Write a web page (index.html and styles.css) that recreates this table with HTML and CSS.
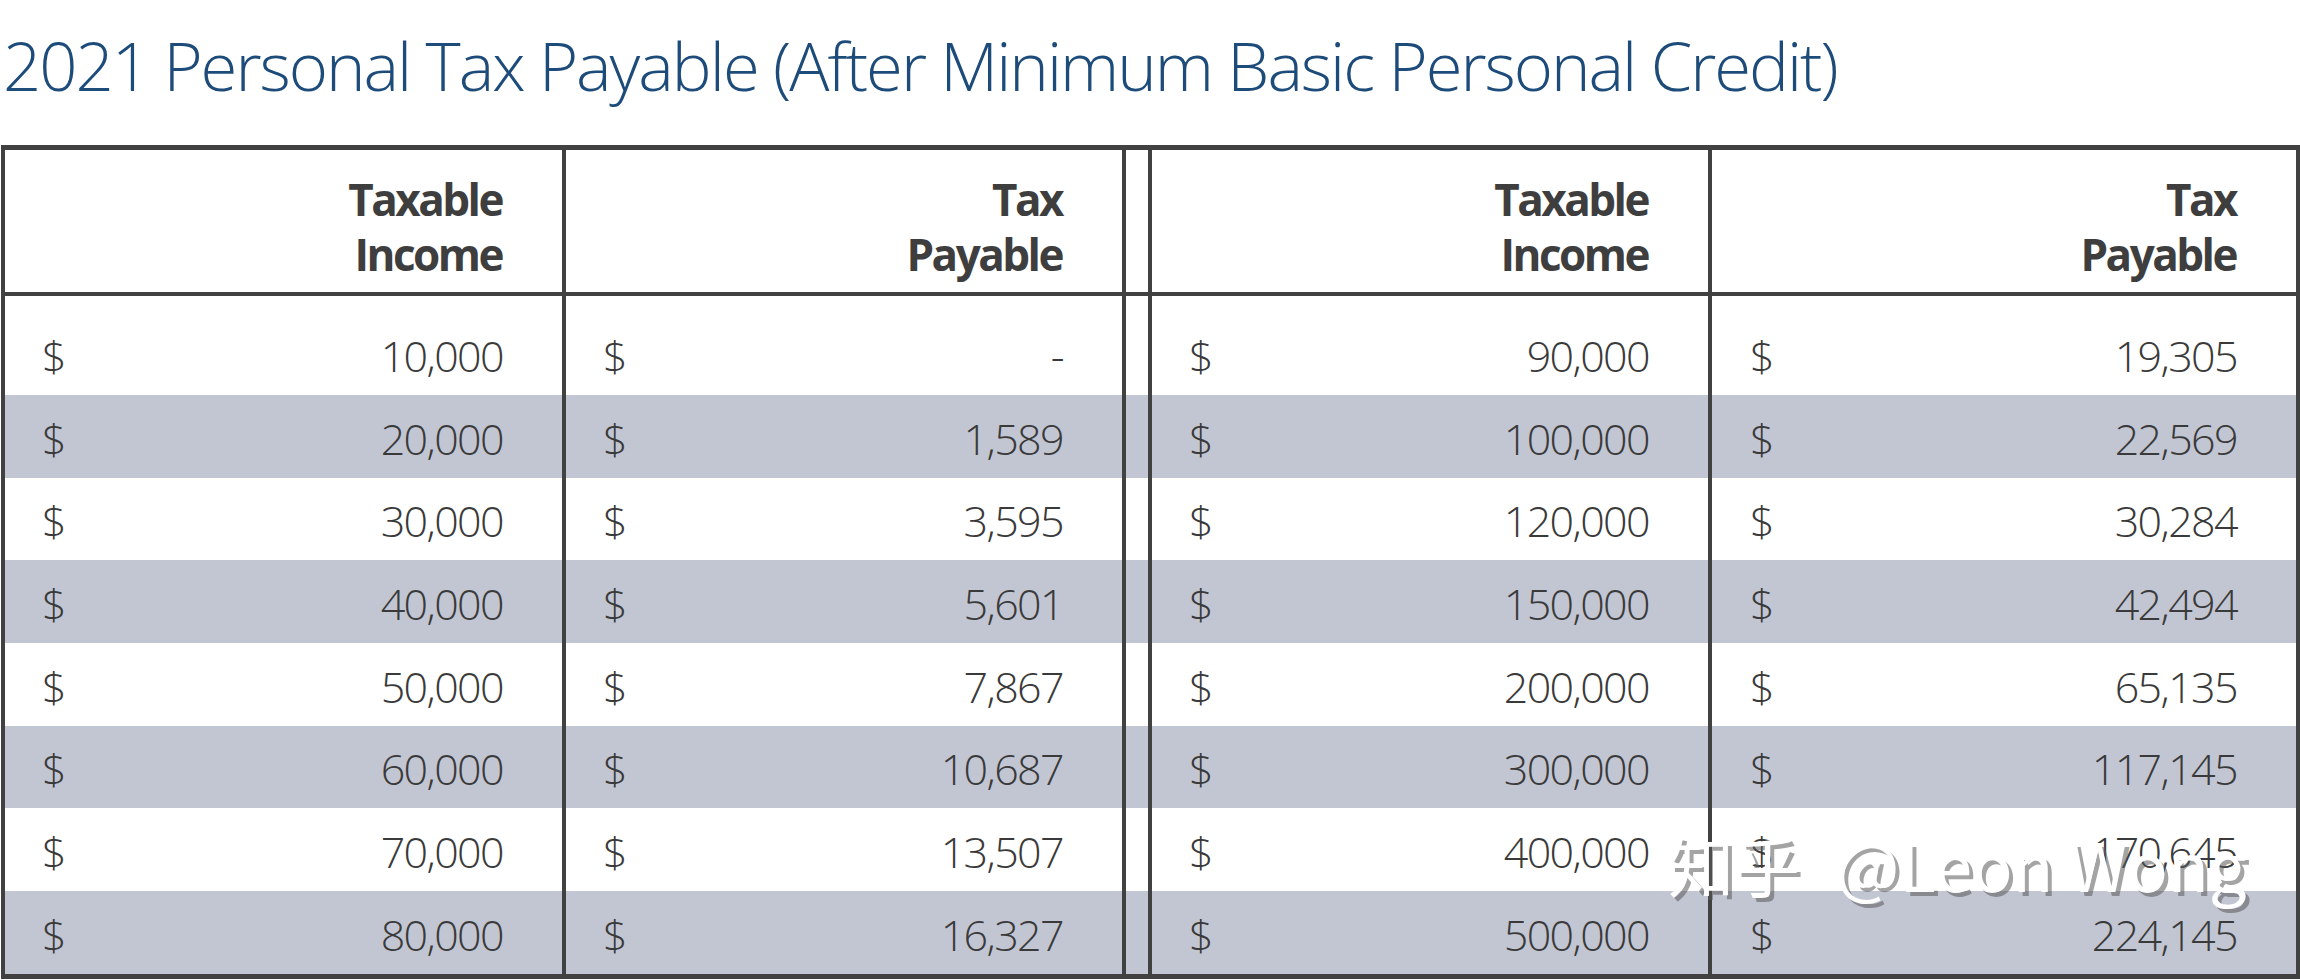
FILE: index.html
```html
<!DOCTYPE html>
<html lang="en">
<head>
<meta charset="utf-8">
<title>2021 Personal Tax Payable</title>
<link rel="stylesheet" href="styles.css">
</head>
<body>
<div class="page">
  <h1 class="title">2021 Personal Tax Payable (After Minimum Basic Personal Credit)</h1>
  <div class="sheet">
    <div class="row head">
      <div class="cell"><span class="hd">Taxable<br>Income</span></div>
      <div class="cell"><span class="hd">Tax<br>Payable</span></div>
      <div class="cell gap"></div>
      <div class="cell"><span class="hd">Taxable<br>Income</span></div>
      <div class="cell last"><span class="hd">Tax<br>Payable</span></div>
    </div>
    <div class="row first">
      <div class="cell"><span>$</span><span>10,000</span></div>
      <div class="cell"><span>$</span><span>-</span></div>
      <div class="cell gap"></div>
      <div class="cell"><span>$</span><span>90,000</span></div>
      <div class="cell last"><span>$</span><span>19,305</span></div>
    </div>
    <div class="row shade">
      <div class="cell"><span>$</span><span>20,000</span></div>
      <div class="cell"><span>$</span><span>1,589</span></div>
      <div class="cell gap"></div>
      <div class="cell"><span>$</span><span>100,000</span></div>
      <div class="cell last"><span>$</span><span>22,569</span></div>
    </div>
    <div class="row">
      <div class="cell"><span>$</span><span>30,000</span></div>
      <div class="cell"><span>$</span><span>3,595</span></div>
      <div class="cell gap"></div>
      <div class="cell"><span>$</span><span>120,000</span></div>
      <div class="cell last"><span>$</span><span>30,284</span></div>
    </div>
    <div class="row shade">
      <div class="cell"><span>$</span><span>40,000</span></div>
      <div class="cell"><span>$</span><span>5,601</span></div>
      <div class="cell gap"></div>
      <div class="cell"><span>$</span><span>150,000</span></div>
      <div class="cell last"><span>$</span><span>42,494</span></div>
    </div>
    <div class="row">
      <div class="cell"><span>$</span><span>50,000</span></div>
      <div class="cell"><span>$</span><span>7,867</span></div>
      <div class="cell gap"></div>
      <div class="cell"><span>$</span><span>200,000</span></div>
      <div class="cell last"><span>$</span><span>65,135</span></div>
    </div>
    <div class="row shade">
      <div class="cell"><span>$</span><span>60,000</span></div>
      <div class="cell"><span>$</span><span>10,687</span></div>
      <div class="cell gap"></div>
      <div class="cell"><span>$</span><span>300,000</span></div>
      <div class="cell last"><span>$</span><span>117,145</span></div>
    </div>
    <div class="row">
      <div class="cell"><span>$</span><span>70,000</span></div>
      <div class="cell"><span>$</span><span>13,507</span></div>
      <div class="cell gap"></div>
      <div class="cell"><span>$</span><span>400,000</span></div>
      <div class="cell last"><span>$</span><span>170,645</span></div>
    </div>
    <div class="row shade">
      <div class="cell"><span>$</span><span>80,000</span></div>
      <div class="cell"><span>$</span><span>16,327</span></div>
      <div class="cell gap"></div>
      <div class="cell"><span>$</span><span>500,000</span></div>
      <div class="cell last"><span>$</span><span>224,145</span></div>
    </div>
  </div>
  <div class="watermark"><span class="wm-cjk">知乎</span><span class="wm-name">@Leon Wong</span></div>
</div>
</body>
</html>
```
FILE: styles.css
```css
html, body {
  margin: 0;
  padding: 0;
  background: #ffffff;
}

.page {
  position: relative;
  width: 2300px;
  height: 980px;
  overflow: hidden;
  font-family: "Open Sans", "Noto Sans", sans-serif;
}

.title {
  margin: 31px 0 0 3px;
  font-size: 67px;
  line-height: 68px;
  font-weight: 300;
  letter-spacing: -2px;
  color: #1d4b7a;
  white-space: nowrap;
}

.sheet {
  margin: 46px 0 0 1px;
  width: 2291px;
  border-left: 4px solid #414141;
  border-right: 4px solid #414141;
  border-top: 5px solid #414141;
  border-bottom: 5px solid #414141;
}

.row {
  display: grid;
  grid-template-columns: 561px 560px 26px 560px 584px;
  height: 82.7px;
}

.row.head {
  height: 146px;
  border-bottom: 4px solid #414141;
  box-sizing: border-box;
}

.row.first {
  height: 99px;
}

.row.shade {
  background: #c2c6d3;
}

.cell {
  box-sizing: border-box;
  border-right: 4px solid #414141;
  display: flex;
  justify-content: space-between;
  align-items: flex-end;
  padding: 0 59px 18px 37px;
  font-size: 43px;
  line-height: 43px;
  font-weight: 300;
  letter-spacing: -1.6px;
  color: #3a3a3a;
}

.cell.last {
  border-right: none;
  padding-left: 38px;
  padding-right: 59px;
}

.row.head .cell {
  justify-content: flex-end;
  padding-bottom: 10px;
  padding-right: 60px;
}

.row .cell.gap {
  padding: 0;
}

.hd {
  font-size: 44px;
  line-height: 55px;
  font-weight: 700;
  letter-spacing: -2.5px;
  color: #3e3e3e;
  text-align: right;
}

.watermark {
  position: absolute;
  left: 1668px;
  top: 818px;
  font-family: "Noto Sans CJK SC", "Liberation Sans", sans-serif;
  line-height: 90px;
  color: #ffffff;
  white-space: nowrap;
  text-shadow: 4px 4px 0 rgba(90, 90, 90, 0.55);
  font-size: 66px;
}

.wm-cjk {
  font-size: 66px;
}

.wm-name {
  margin-left: 36px;
  font-size: 67px;
}
```
